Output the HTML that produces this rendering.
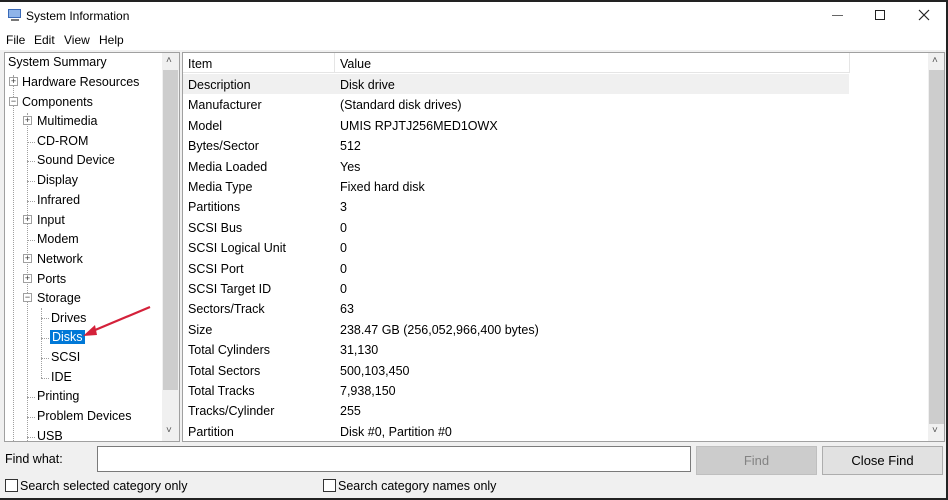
<!DOCTYPE html>
<html><head><style>
*{margin:0;padding:0;box-sizing:border-box}
body{width:948px;height:500px;background:#222;font-family:"Liberation Sans",sans-serif;font-size:12.5px;color:#000;position:relative;overflow:hidden}
#win{position:absolute;left:0;top:2px;width:946px;height:496px;background:#f0f0f0}
#title{position:absolute;left:0;top:0;width:946px;height:28px;background:#fff}
#menu{position:absolute;left:0;top:28px;width:946px;height:20px;background:#fff}
.t{position:absolute;white-space:nowrap}
#tree{position:absolute;left:4px;top:50px;width:176px;height:390px;background:#fff;border:1px solid #a0a0a0;overflow:hidden}
#list{position:absolute;left:182px;top:50px;width:763px;height:390px;background:#fff;border:1px solid #a0a0a0;overflow:hidden}
.sb{position:absolute;top:0;width:17px;height:388px;background:#f0f0f0}
.dot{position:absolute;border-left:1px dotted #a0a0a0}
.hd{position:absolute;border-top:1px dotted #a0a0a0;width:8px}
.pm{position:absolute;width:9px;height:9px;border:1px solid #a0a0a0;background:#fff;font-size:9px;line-height:7px;text-align:center;color:#333}
.btn{position:absolute;height:29px;border:1px solid #adadad;text-align:center;line-height:27px;font-size:13px}
.cb{position:absolute;width:13px;height:13px;border:1px solid #333;background:#fff}
</style></head><body>
<div id="win">
<div id="title">
<svg class="t" style="left:7px;top:6px" width="16" height="14"><rect x="1" y="1" width="13" height="9" fill="#3a6ab8"/><rect x="2" y="2" width="11" height="7" fill="#8fb4e8"/><rect x="4" y="11" width="8" height="2" fill="#777"/></svg>
<div class="t" style="left:26px;top:7px;font-size:12px">System Information</div>
<div class="t" style="left:832px;top:13px;width:11px;height:1px;background:#666"></div>
<div class="t" style="left:875px;top:8px;width:10px;height:10px;border:1px solid #222"></div>
<svg class="t" style="left:918px;top:7px" width="12" height="12"><path d="M1 1L11 11M11 1L1 11" stroke="#222" stroke-width="1.2"/></svg>
</div>
<div id="menu">
<div class="t" style="left:6px;top:3px;font-size:12px">File</div>
<div class="t" style="left:34px;top:3px;font-size:12px">Edit</div>
<div class="t" style="left:64px;top:3px;font-size:12px">View</div>
<div class="t" style="left:99px;top:3px;font-size:12px">Help</div>
</div>
<div id="tree">
<div class="dot" style="left:8px;top:22px;height:368px"></div>
<div class="dot" style="left:22px;top:60px;height:330px"></div>
<div class="dot" style="left:36px;top:255px;height:70px"></div>
<div class="t" style="left:3px;top:2px">System Summary</div>
<div class="pm" style="left:4px;top:24px">+</div><div class="t" style="left:17px;top:22px">Hardware Resources</div>
<div class="pm" style="left:4px;top:44px">−</div><div class="t" style="left:17px;top:42px">Components</div>
<div class="pm" style="left:18px;top:63px">+</div><div class="t" style="left:32px;top:61px">Multimedia</div>
<div class="hd" style="left:22px;top:89px"></div><div class="t" style="left:32px;top:81px">CD-ROM</div>
<div class="hd" style="left:22px;top:108px"></div><div class="t" style="left:32px;top:100px">Sound Device</div>
<div class="hd" style="left:22px;top:128px"></div><div class="t" style="left:32px;top:120px">Display</div>
<div class="hd" style="left:22px;top:148px"></div><div class="t" style="left:32px;top:140px">Infrared</div>
<div class="pm" style="left:18px;top:162px">+</div><div class="t" style="left:32px;top:160px">Input</div>
<div class="hd" style="left:22px;top:187px"></div><div class="t" style="left:32px;top:179px">Modem</div>
<div class="pm" style="left:18px;top:201px">+</div><div class="t" style="left:32px;top:199px">Network</div>
<div class="pm" style="left:18px;top:221px">+</div><div class="t" style="left:32px;top:219px">Ports</div>
<div class="pm" style="left:18px;top:240px">−</div><div class="t" style="left:32px;top:238px">Storage</div>
<div class="hd" style="left:36px;top:265px"></div><div class="t" style="left:46px;top:258px">Drives</div>
<div class="hd" style="left:36px;top:285px"></div><div class="t" style="left:45px;top:277px;background:#0078d7;color:#fff;padding:0 2px">Disks</div>
<div class="hd" style="left:36px;top:305px"></div><div class="t" style="left:46px;top:297px">SCSI</div>
<div class="hd" style="left:36px;top:325px"></div><div class="t" style="left:46px;top:317px">IDE</div>
<div class="hd" style="left:22px;top:344px"></div><div class="t" style="left:32px;top:336px">Printing</div>
<div class="hd" style="left:22px;top:364px"></div><div class="t" style="left:32px;top:356px">Problem Devices</div>
<div class="hd" style="left:22px;top:384px"></div><div class="t" style="left:32px;top:376px">USB</div>
<div class="sb" style="left:157px"><div style="position:absolute;left:1px;top:17px;width:15px;height:320px;background:#cdcdcd"></div>
<div class="t" style="left:4px;top:2px;font-size:10px;color:#555">&#708;</div><div class="t" style="left:4px;top:372px;font-size:10px;color:#555">&#709;</div></div>
</div>
<svg class="t" style="left:78px;top:302px" width="80" height="40"><path d="M72 3L10 29" stroke="#d4213a" stroke-width="2.2"/><path d="M5 32L17 21L19 31Z" fill="#d4213a"/></svg>
<div id="list">
<div style="position:absolute;left:0;top:0;width:666px;height:20px;border-bottom:1px solid #e5e5e5"></div>
<div style="position:absolute;left:151px;top:0;height:20px;border-left:1px solid #e5e5e5"></div>
<div style="position:absolute;left:666px;top:0;height:20px;border-left:1px solid #e5e5e5"></div>
<div style="position:absolute;left:0;top:21px;width:666px;height:20px;background:#f0f0f0"></div>
<div class="t" style="left:5px;top:4px">Item</div><div class="t" style="left:157px;top:4px">Value</div>
<div id="rows"></div>
<div class="sb" style="left:745px"><div style="position:absolute;left:1px;top:17px;width:15px;height:354px;background:#cdcdcd"></div>
<div class="t" style="left:4px;top:2px;font-size:10px;color:#555">&#708;</div><div class="t" style="left:4px;top:372px;font-size:10px;color:#555">&#709;</div></div>
</div>
<div class="t" style="left:5px;top:450px">Find what:</div>
<div class="t" style="left:97px;top:444px;width:594px;height:26px;background:#fff;border:1px solid #7a7a7a"></div>
<div class="btn" style="left:696px;top:444px;width:121px;background:#cccccc;border-color:#bfbfbf;color:#838383">Find</div>
<div class="btn" style="left:822px;top:444px;width:121px;background:#e1e1e1">Close Find</div>
<div class="cb" style="left:5px;top:477px"></div><div class="t" style="left:20px;top:477px">Search selected category only</div>
<div class="cb" style="left:323px;top:477px"></div><div class="t" style="left:338px;top:477px">Search category names only</div>
</div>
<script>
var d=[["Description","Disk drive"],["Manufacturer","(Standard disk drives)"],["Model","UMIS RPJTJ256MED1OWX"],["Bytes/Sector","512"],["Media Loaded","Yes"],["Media Type","Fixed hard disk"],["Partitions","3"],["SCSI Bus","0"],["SCSI Logical Unit","0"],["SCSI Port","0"],["SCSI Target ID","0"],["Sectors/Track","63"],["Size","238.47 GB (256,052,966,400 bytes)"],["Total Cylinders","31,130"],["Total Sectors","500,103,450"],["Total Tracks","7,938,150"],["Tracks/Cylinder","255"],["Partition","Disk #0, Partition #0"]];
var h="";d.forEach(function(r,i){var y=25+i*20.4;h+='<div class="t" style="left:5px;top:'+y+'px">'+r[0]+'</div><div class="t" style="left:157px;top:'+y+'px">'+r[1]+'</div>'});
document.getElementById("rows").innerHTML=h;
</script>
</body></html>
